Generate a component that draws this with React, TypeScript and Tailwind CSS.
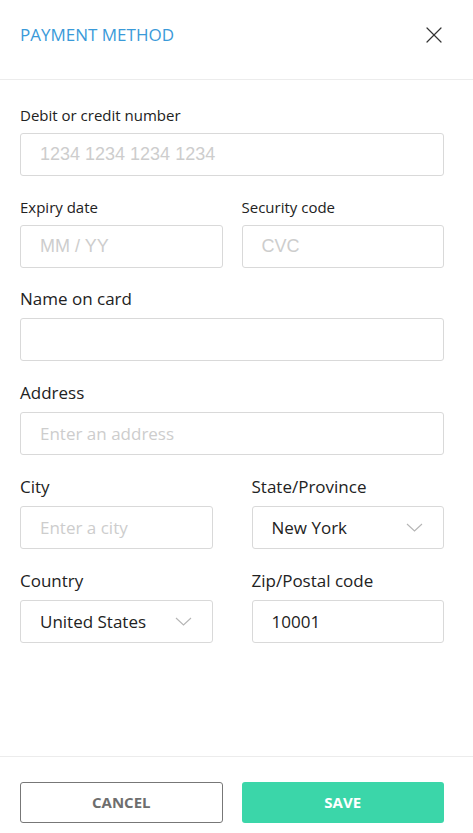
import { X } from 'lucide-react';

const font = { fontFamily: '"Open Sans", "Noto Sans", sans-serif' };

function Chevron() {
  return (
    <svg width="17" height="9" viewBox="0 0 17 9" fill="none" className="shrink-0">
      <path d="M1 1l7.5 7 7.5-7" stroke="#b5b5b5" strokeWidth="1.1" />
    </svg>
  );
}

function Field({ placeholder, value, arial }: { placeholder?: string; value?: string; arial?: boolean }) {
  return (
    <div
      className={`h-[43px] rounded-[3px] border border-[#d9d9d9] bg-white px-[19px] flex items-center ${arial ? 'text-[18px]' : 'text-[17px]'}`}
      style={arial ? { fontFamily: '"Liberation Sans", Arial, sans-serif' } : undefined}
    >
      {value ? <span className="text-[#222]">{value}</span> : <span className="text-[#cdcdcd]">{placeholder}</span>}
    </div>
  );
}

function SelectField({ value }: { value: string }) {
  return (
    <div className="h-[43px] rounded-[3px] border border-[#d9d9d9] bg-white pl-[19px] pr-5 flex items-center justify-between text-[17px] text-[#222]">
      <span>{value}</span>
      <Chevron />
    </div>
  );
}

export default function App() {
  return (
    <div className="w-[473px] h-[833px] bg-white flex flex-col" style={font}>
      <header className="h-[80px] border-b border-[#ececec] flex items-center justify-between pl-5 pr-[25px] pb-[10px]">
        <h1 className="text-[17px] text-[#3a9ad9]">PAYMENT METHOD</h1>
        <X size={28} strokeWidth={1.05} className="text-[#333]" />
      </header>

      <main className="flex-1 pl-5 pr-[29px] pt-[25px]">
        <label className="block text-[15px] text-[#222] leading-5 mb-[8px]">Debit or credit number</label>
        <Field placeholder="1234 1234 1234 1234" arial />

        <div className="grid grid-cols-2 gap-[19px] mt-[21px]">
          <div>
            <label className="block text-[15px] text-[#222] leading-5 mb-[8px]">Expiry date</label>
            <Field placeholder="MM / YY" arial />
          </div>
          <div>
            <label className="block text-[15px] text-[#222] leading-5 mb-[8px]">Security code</label>
            <Field placeholder="CVC" arial />
          </div>
        </div>

        <label className="block text-[17px] text-[#222] leading-6 mt-[19px] mb-[7px]">Name on card</label>
        <Field />

        <label className="block text-[17px] text-[#222] leading-6 mt-[20px] mb-[7px]">Address</label>
        <Field placeholder="Enter an address" />

        <div className="grid grid-cols-2 gap-x-[39px] gap-y-[20px] mt-[20px]">
          <div>
            <label className="block text-[17px] text-[#222] leading-6 mb-[7px]">City</label>
            <Field placeholder="Enter a city" />
          </div>
          <div>
            <label className="block text-[17px] text-[#222] leading-6 mb-[7px]">State/Province</label>
            <SelectField value="New York" />
          </div>
          <div>
            <label className="block text-[17px] text-[#222] leading-6 mb-[7px]">Country</label>
            <SelectField value="United States" />
          </div>
          <div>
            <label className="block text-[17px] text-[#222] leading-6 mb-[7px]">Zip/Postal code</label>
            <Field value="10001" />
          </div>
        </div>
      </main>

      <footer className="h-[77px] border-t border-[#ececec] grid grid-cols-2 gap-[19px] pl-5 pr-[29px] pt-[25px]">
        <button className="h-[41px] rounded-[3px] border border-[#777] text-[15px] font-bold text-[#6e6e6e]">CANCEL</button>
        <button className="h-[41px] rounded-[3px] bg-[#3bd6a9] text-[15px] font-bold text-white">SAVE</button>
      </footer>
    </div>
  );
}
